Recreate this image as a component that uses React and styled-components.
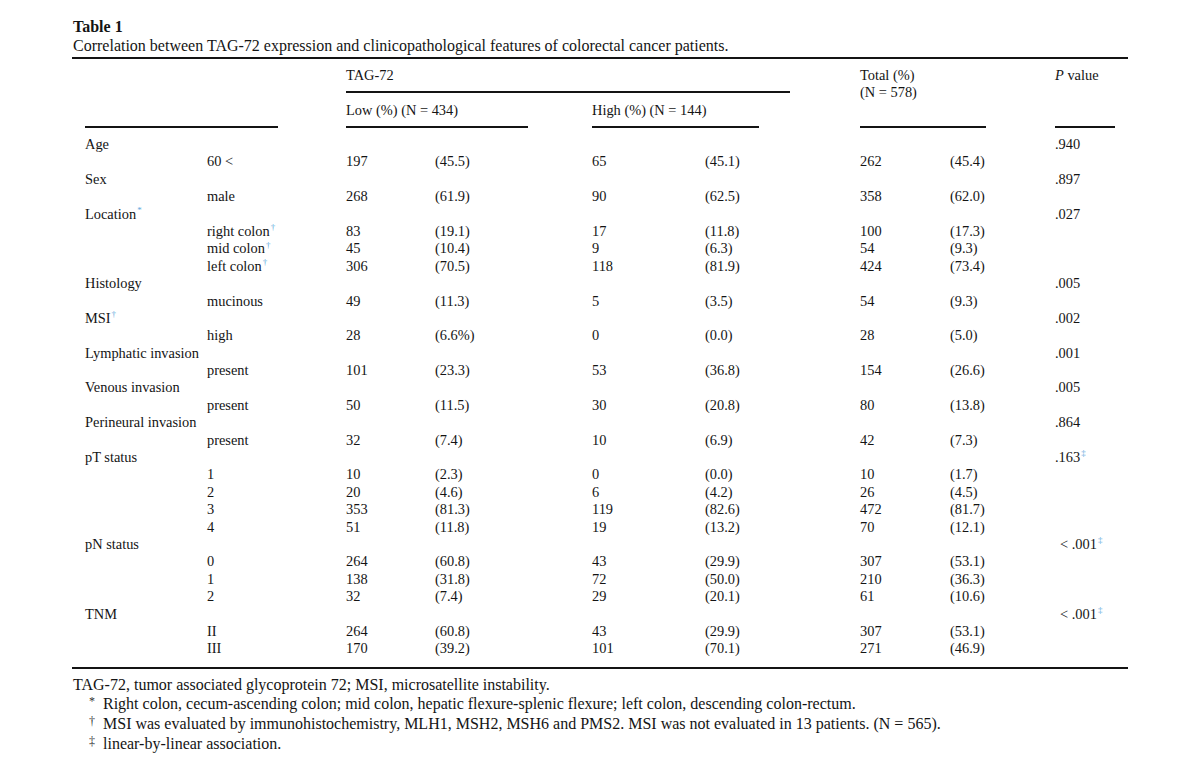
import React from "react";
import styled, { createGlobalStyle } from "styled-components";

const GlobalStyle = createGlobalStyle`
  html, body {
    margin: 0;
    padding: 0;
    background: #ffffff;
  }
  body {
    font-family: "Liberation Serif", "Times New Roman", serif;
    color: #141414;
  }
`;

const groups = [
  { label: "Age", p: ".940", rows: [{ sub: "60 <", v: ["197", "(45.5)", "65", "(45.1)", "262", "(45.4)"] }] },
  { label: "Sex", p: ".897", rows: [{ sub: "male", v: ["268", "(61.9)", "90", "(62.5)", "358", "(62.0)"] }] },
  {
    label: "Location",
    sup: "*",
    p: ".027",
    rows: [
      { sub: "right colon", sup: "†", v: ["83", "(19.1)", "17", "(11.8)", "100", "(17.3)"] },
      { sub: "mid colon", sup: "†", v: ["45", "(10.4)", "9", "(6.3)", "54", "(9.3)"] },
      { sub: "left colon", sup: "†", v: ["306", "(70.5)", "118", "(81.9)", "424", "(73.4)"] },
    ],
  },
  { label: "Histology", p: ".005", rows: [{ sub: "mucinous", v: ["49", "(11.3)", "5", "(3.5)", "54", "(9.3)"] }] },
  { label: "MSI", sup: "†", p: ".002", rows: [{ sub: "high", v: ["28", "(6.6%)", "0", "(0.0)", "28", "(5.0)"] }] },
  { label: "Lymphatic invasion", p: ".001", rows: [{ sub: "present", v: ["101", "(23.3)", "53", "(36.8)", "154", "(26.6)"] }] },
  { label: "Venous invasion", p: ".005", rows: [{ sub: "present", v: ["50", "(11.5)", "30", "(20.8)", "80", "(13.8)"] }] },
  { label: "Perineural invasion", p: ".864", rows: [{ sub: "present", v: ["32", "(7.4)", "10", "(6.9)", "42", "(7.3)"] }] },
  {
    label: "pT status",
    p: ".163",
    psup: "‡",
    rows: [
      { sub: "1", v: ["10", "(2.3)", "0", "(0.0)", "10", "(1.7)"] },
      { sub: "2", v: ["20", "(4.6)", "6", "(4.2)", "26", "(4.5)"] },
      { sub: "3", v: ["353", "(81.3)", "119", "(82.6)", "472", "(81.7)"] },
      { sub: "4", v: ["51", "(11.8)", "19", "(13.2)", "70", "(12.1)"] },
    ],
  },
  {
    label: "pN status",
    p: "< .001",
    psup: "‡",
    indent: true,
    rows: [
      { sub: "0", v: ["264", "(60.8)", "43", "(29.9)", "307", "(53.1)"] },
      { sub: "1", v: ["138", "(31.8)", "72", "(50.0)", "210", "(36.3)"] },
      { sub: "2", v: ["32", "(7.4)", "29", "(20.1)", "61", "(10.6)"] },
    ],
  },
  {
    label: "TNM",
    p: "< .001",
    psup: "‡",
    indent: true,
    rows: [
      { sub: "II", v: ["264", "(60.8)", "43", "(29.9)", "307", "(53.1)"] },
      { sub: "III", v: ["170", "(39.2)", "101", "(70.1)", "271", "(46.9)"] },
    ],
  },
];

const notes = [
  { mark: "*", text: "Right colon, cecum-ascending colon; mid colon, hepatic flexure-splenic flexure; left colon, descending colon-rectum." },
  { mark: "†", text: "MSI was evaluated by immunohistochemistry, MLH1, MSH2, MSH6 and PMS2. MSI was not evaluated in 13 patients. (N = 565)." },
  { mark: "‡", text: "linear-by-linear association." },
];

export default function App() {
  return (
    <>
      <GlobalStyle />
      <Page>
        <Title>Table 1</Title>
        <Caption>Correlation between TAG-72 expression and clinicopathological features of colorectal cancer patients.</Caption>
        <Table>
          <Head>
            <HeadCell col="1 / span 2" row="1 / span 2" line={193} />
            <HeadCell col="3 / span 4" row="1" line={444}>TAG-72</HeadCell>
            <HeadCell col="7 / span 2" row="1 / span 2" line={126}>
              Total (%)
              <br />
              (N = 578)
            </HeadCell>
            <HeadCell col="9" row="1 / span 2" line={60}>
              <i>P</i> value
            </HeadCell>
            <HeadCell col="3 / span 2" row="2" line={182} low>Low (%) (N = 434)</HeadCell>
            <HeadCell col="5 / span 2" row="2" line={167} low>High (%) (N = 144)</HeadCell>
          </Head>
          <Body>
            {groups.map((g) => (
              <React.Fragment key={g.label}>
                <Label>
                  {g.label}
                  {g.sup && <Sup>{g.sup}</Sup>}
                </Label>
                <PCell indent={g.indent}>
                  {g.p}
                  {g.psup && <Sup>{g.psup}</Sup>}
                </PCell>
                {g.rows.map((r, i) => (
                  <React.Fragment key={i}>
                    <Sub>
                      {r.sub}
                      {r.sup && <Sup>{r.sup}</Sup>}
                    </Sub>
                    {r.v.map((x, j) => (
                      <Cell key={j}>{x}</Cell>
                    ))}
                    <Cell />
                  </React.Fragment>
                ))}
              </React.Fragment>
            ))}
          </Body>
        </Table>
        <Notes>
          <Note>TAG-72, tumor associated glycoprotein 72; MSI, microsatellite instability.</Note>
          {notes.map((n) => (
            <Note key={n.mark} indent>
              <Mark>{n.mark}</Mark>
              {n.text}
            </Note>
          ))}
        </Notes>
      </Page>
    </>
  );
}

const Page = styled.div`
  width: 1056px;
  padding: 17px 0 0 72px;
`;

const Title = styled.div`
  font-weight: bold;
  font-size: 16px;
  line-height: 19px;
  padding-left: 1px;
`;

const Caption = styled.div`
  font-size: 16px;
  line-height: 20px;
  padding-left: 1px;
`;

const cols = "122px 139px 89px 157px 113px 155px 90px 105px 1fr";

const Table = styled.div`
  margin-top: 1px;
  border-top: 2px solid #141414;
  border-bottom: 2px solid #141414;
  padding: 0 0 9px 13px;
  font-size: 14.4px;
`;

const Head = styled.div`
  display: grid;
  grid-template-columns: ${cols};
  grid-template-rows: 34px 35px;
`;

const HeadCell = styled.div`
  grid-column: ${(p) => p.col};
  grid-row: ${(p) => p.row};
  position: relative;
  padding-top: ${(p) => (p.low ? "9px" : "8px")};
  line-height: 17px;

  &::after {
    content: "";
    position: absolute;
    left: 0;
    bottom: 0;
    width: ${(p) => p.line}px;
    height: 2px;
    background: #141414;
  }
`;

const Body = styled.div`
  display: grid;
  grid-template-columns: ${cols};
  grid-auto-rows: 17.4px;
  line-height: 17.4px;
  padding-top: 8px;
`;

const Label = styled.div`
  grid-column: 1 / span 8;
  white-space: nowrap;
`;

const PCell = styled.div`
  grid-column: 9;
  padding-left: ${(p) => (p.indent ? "5px" : "0")};
  white-space: nowrap;
`;

const Sub = styled.div`
  grid-column: 2;
  white-space: nowrap;
`;

const Cell = styled.div`
  white-space: nowrap;
`;

const Sup = styled.sup`
  font-size: 9px;
  color: #5fa9dc;
  line-height: 0;
  margin-left: 1px;
`;

const Notes = styled.div`
  padding: 6px 0 0 1px;
  font-size: 16px;
  line-height: 19.7px;
`;

const Note = styled.div`
  padding-left: ${(p) => (p.indent ? "16px" : "0")};
  white-space: nowrap;
`;

const Mark = styled.span`
  display: inline-block;
  width: 14px;
  font-size: 12px;
  line-height: 0;
  position: relative;
  top: -4px;
  color: #333;
`;
